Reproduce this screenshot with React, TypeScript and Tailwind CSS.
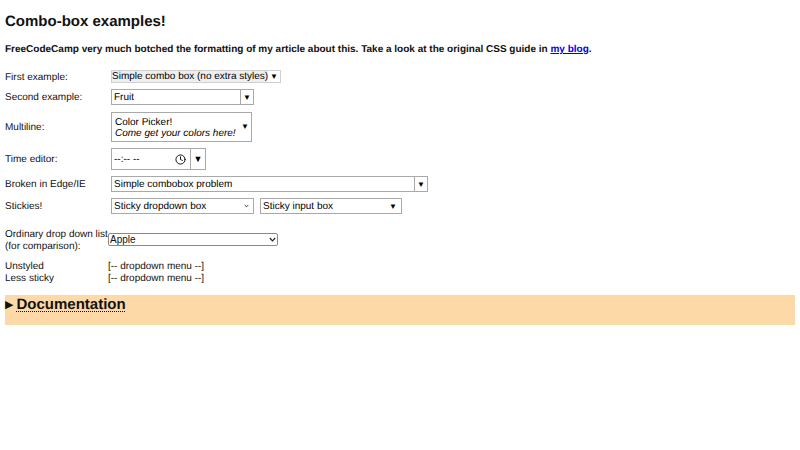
import { Clock } from "lucide-react";

const box = "flex items-center border border-[#a9a9a9] bg-white text-black";
const label = "w-[106px] shrink-0 pt-[2px]";

function Arrow({ className = "" }: { className?: string }) {
  return <span className={`leading-none text-black ${className}`}>▼</span>;
}

export default function App() {
  return (
    <div className="min-h-[450px] bg-white px-[5px] text-[10px] leading-[11.5px] text-[#111] [text-rendering:geometricPrecision] font-['Liberation_Sans',Arial,sans-serif]">
      <h1 className="pt-[12px] text-[15px] leading-[19px] font-bold">Combo-box examples!</h1>
      <p className="mt-[12px] font-bold leading-[14px]">
        FreeCodeCamp very much botched the formatting of my article about this. Take a look at the original CSS guide in{" "}
        <a href="#" className="text-[#0000ee] underline">my blog</a>.
      </p>

      <div className="mt-[13px] flex h-[13px] items-center">
        <span className={label}>First example:</span>
        <div className={`${box} h-[13px] w-[170px] border-[#d0d0d0]`}>
          <span className="h-full w-[156px] shrink-0 whitespace-nowrap bg-[#eeeeee] leading-[12px]">Simple combo box (no extra styles)</span>
          <Arrow className="flex-1 pt-[1px] text-center text-[8px]" />
        </div>
      </div>

      <div className="mt-[6px] flex h-[16px] items-center">
        <span className={label}>Second example:</span>
        <div className={`${box} h-[16px] w-[143px]`}>
          <span className="flex h-full w-[129px] shrink-0 items-center border-r border-[#a9a9a9] pl-[2px] pt-[2px]">Fruit</span>
          <Arrow className="flex-1 pt-[1px] text-center text-[8px]" />
        </div>
      </div>

      <div className="mt-[7px] flex h-[30px] items-center">
        <span className={label}>Multiline:</span>
        <div className={`${box} h-[30px] w-[141px] pl-[3px]`}>
          <div className="w-[126px] shrink-0 pt-[2px]">
            Color Picker!
            <br />
            <i>Come get your colors here!</i>
          </div>
          <Arrow className="-mt-[1px] text-[8px]" />
        </div>
      </div>

      <div className="mt-[6px] flex h-[22px] items-center">
        <span className={label}>Time editor:</span>
        <div className={`${box} h-[22px] w-[95px]`}>
          <div className="flex h-full w-[79px] shrink-0 items-center justify-between border-r border-[#a9a9a9] pl-[2px] pr-[4px]">
            <span className="pt-[2px]">--:-- --</span>
            <Clock size={11} strokeWidth={2} />
          </div>
          <Arrow className="flex-1 pt-[1px] text-center text-[9px]" />
        </div>
      </div>

      <div className="mt-[6px] flex h-[16px] items-center">
        <span className={label}>Broken in Edge/IE</span>
        <div className={`${box} h-[16px] w-[317px]`}>
          <span className="flex h-full w-[303px] shrink-0 items-center border-r border-[#a9a9a9] pl-[2px] pt-[2px]">Simple combobox problem</span>
          <Arrow className="flex-1 pt-[1px] text-center text-[8px]" />
        </div>
      </div>

      <div className="mt-[6px] flex h-[16px] items-center">
        <span className={label}>Stickies!</span>
        <div className={`${box} h-[16px] w-[143px] justify-between pl-[2px] pr-[3px]`}>
          <span className="pt-[2px]">Sticky dropdown box</span>
          <svg width="5" height="4" viewBox="0 0 5 4" className="mr-[1px]">
            <path d="M0.7 1 L2.5 2.8 L4.3 1" fill="none" stroke="#222" strokeWidth="0.9" />
          </svg>
        </div>
        <div className={`${box} ml-[6px] h-[16px] w-[142px] justify-between pl-[2px] pr-[4px]`}>
          <span className="pt-[2px]">Sticky input box</span>
          <Arrow className="pt-[1px] text-[8px]" />
        </div>
      </div>

      <div className="mt-[14px] flex items-center">
        <span className="w-[103px] shrink-0 whitespace-nowrap pt-[1px]">
          <span className="block">Ordinary drop down list</span>
          <span className="block">(for comparison):</span>
        </span>
        <div className="relative -mt-[1px]">
          <select className="block h-[13px] w-[170px] appearance-none rounded-[2px] border border-[#8a8a8a] bg-white pl-[1px] text-[10px] leading-[11px]">
            <option>Apple</option>
          </select>
          <svg width="7" height="5" viewBox="0 0 7 5" className="absolute right-[2px] top-[4px]">
            <path d="M0.8 1 L3.5 3.8 L6.2 1" fill="none" stroke="#222" strokeWidth="1.2" />
          </svg>
        </div>
      </div>

      <div className="mt-[9px] flex">
        <span className="w-[103px]">Unstyled</span>
        <span>[-- dropdown menu --]</span>
      </div>
      <div className="flex">
        <span className="w-[103px]">Less sticky</span>
        <span>[-- dropdown menu --]</span>
      </div>

      <div className="mt-[11px] h-[30px] w-[790px] bg-[#fed9a8]">
        <div className="flex h-[19px] items-center pt-[1px]">
          <span className="text-[11px] leading-none">▶</span>
          <h2 className="ml-[3px] text-[15px] leading-[18px] font-bold underline decoration-dotted decoration-1 underline-offset-2">Documentation</h2>
        </div>
      </div>
    </div>
  );
}
